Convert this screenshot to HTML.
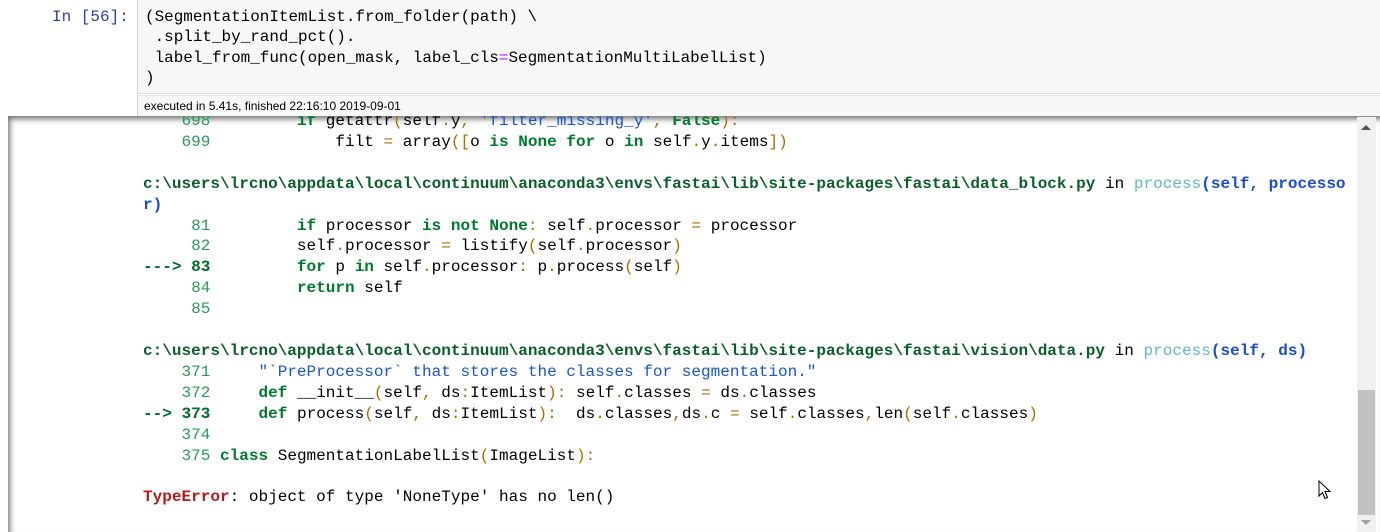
<!DOCTYPE html>
<html><head><meta charset="utf-8"><style>
html,body{margin:0;padding:0;width:1380px;height:532px;overflow:hidden;background:#fff;font-family:"Liberation Mono",monospace;}
.prompt{position:absolute;left:52px;top:7px;font-size:16px;color:#303f9f;line-height:20px;}
.inbox{position:absolute;left:137px;top:0;width:1245px;height:93px;background:#f7f7f7;border-left:1px solid #cfcfcf;border-bottom:1px solid #dcdcdc;}
.incode{position:absolute;left:145px;top:7px;font-size:15.95px;line-height:20.3px;white-space:pre;color:#000;}
.exec{position:absolute;left:137px;top:95px;width:1245px;height:20px;background:#f7f7f7;border-left:1px solid #cfcfcf;border-top:1px solid #e4e4e4;font-family:"Liberation Sans",sans-serif;font-size:12px;line-height:20px;}
.exec span{padding-left:6px;}
.out{position:absolute;left:8px;top:116px;width:1372px;height:416px;overflow:hidden;box-shadow:inset 3px 4px 6px -1px rgba(0,0,0,.55);}
.oc{position:absolute;left:135px;top:-5px;font-size:16.05px;line-height:20.9px;white-space:pre;color:#000;}
.n{color:#2a9a5a}.nb{color:#006b2c;font-weight:bold}
.k{color:#007a2e;font-weight:bold}.p{color:#0b5e2e;font-weight:bold}
.o{color:#a86d00}.s{color:#1a55cc}.f{color:#5fb8c8}.b{color:#1a4ccc;font-weight:bold}
.e{color:#b21b1b;font-weight:bold}.m{color:#aa22ff}
.sb{position:absolute;left:1357px;top:117px;width:19px;height:415px;background:#f0f0f0;}
.th{position:absolute;left:1358px;top:390px;width:17px;height:125px;background:#c1c1c1;}
</style></head><body>
<div class="inbox"></div>
<div class="prompt">In [56]:</div>
<div class="incode">(SegmentationItemList.from_folder(path) \
 .split_by_rand_pct().
 label_from_func(open_mask, label_cls<span class="m">=</span>SegmentationMultiLabelList)
)</div>
<div class="exec"><span>executed in 5.41s, finished 22:16:10 2019-09-01</span></div>
<div class="out"><div class="oc"><span class="n">    698</span>         <span class="k">if</span> getattr<span class="o">(</span>self<span class="o">.</span>y<span class="o">,</span> <span class="s">'filter_missing_y'</span><span class="o">,</span> <span class="k">False</span><span class="o">):</span>
<span class="n">    699</span>             filt <span class="o">=</span> array<span class="o">([</span>o <span class="k">is</span> <span class="k">None</span> <span class="k">for</span> o <span class="k">in</span> self<span class="o">.</span>y<span class="o">.</span>items<span class="o">])</span>

<span class="p">c:\users\lrcno\appdata\local\continuum\anaconda3\envs\fastai\lib\site-packages\fastai\data_block.py</span> in <span class="f">process</span><span class="b">(self, processo</span>
<span class="b">r)</span>
<span class="n">     81</span>         <span class="k">if</span> processor <span class="k">is</span> <span class="k">not</span> <span class="k">None</span><span class="o">:</span> self<span class="o">.</span>processor <span class="o">=</span> processor
<span class="n">     82</span>         self<span class="o">.</span>processor <span class="o">=</span> listify<span class="o">(</span>self<span class="o">.</span>processor<span class="o">)</span>
<span class="nb">---&gt; 83</span>         <span class="k">for</span> p <span class="k">in</span> self<span class="o">.</span>processor<span class="o">:</span> p<span class="o">.</span>process<span class="o">(</span>self<span class="o">)</span>
<span class="n">     84</span>         <span class="k">return</span> self
<span class="n">     85</span>

<span class="p">c:\users\lrcno\appdata\local\continuum\anaconda3\envs\fastai\lib\site-packages\fastai\vision\data.py</span> in <span class="f">process</span><span class="b">(self, ds)</span>
<span class="n">    371</span>     <span class="s">"`PreProcessor` that stores the classes for segmentation."</span>
<span class="n">    372</span>     <span class="k">def</span> __init__<span class="o">(</span>self<span class="o">,</span> ds<span class="o">:</span>ItemList<span class="o">):</span> self<span class="o">.</span>classes <span class="o">=</span> ds<span class="o">.</span>classes
<span class="nb">--&gt; 373</span>     <span class="k">def</span> process<span class="o">(</span>self<span class="o">,</span> ds<span class="o">:</span>ItemList<span class="o">):</span>  ds<span class="o">.</span>classes<span class="o">,</span>ds<span class="o">.</span>c <span class="o">=</span> self<span class="o">.</span>classes<span class="o">,</span>len<span class="o">(</span>self<span class="o">.</span>classes<span class="o">)</span>
<span class="n">    374</span>
<span class="n">    375</span> <span class="k">class</span> SegmentationLabelList<span class="o">(</span>ImageList<span class="o">):</span>

<span class="e">TypeError</span>: object of type 'NoneType' has no len()</div></div>
<div class="sb"></div>
<div class="th"></div>
<svg style="position:absolute;left:1360px;top:122px" width="12" height="10"><path d="M1 8 L6 3 L11 8 Z" fill="#505050"/></svg>
<svg style="position:absolute;left:1360px;top:518px" width="12" height="10"><path d="M1 2 L6 7 L11 2 Z" fill="#a0a0a0"/></svg>
<svg style="position:absolute;left:1318px;top:480px" width="14" height="22"><path d="M1 1 L1 16 L4.5 12.5 L7 18.5 L9.5 17.5 L7 11.5 L12 11.5 Z" fill="#fff" stroke="#000" stroke-width="1"/></svg>
</body></html>
